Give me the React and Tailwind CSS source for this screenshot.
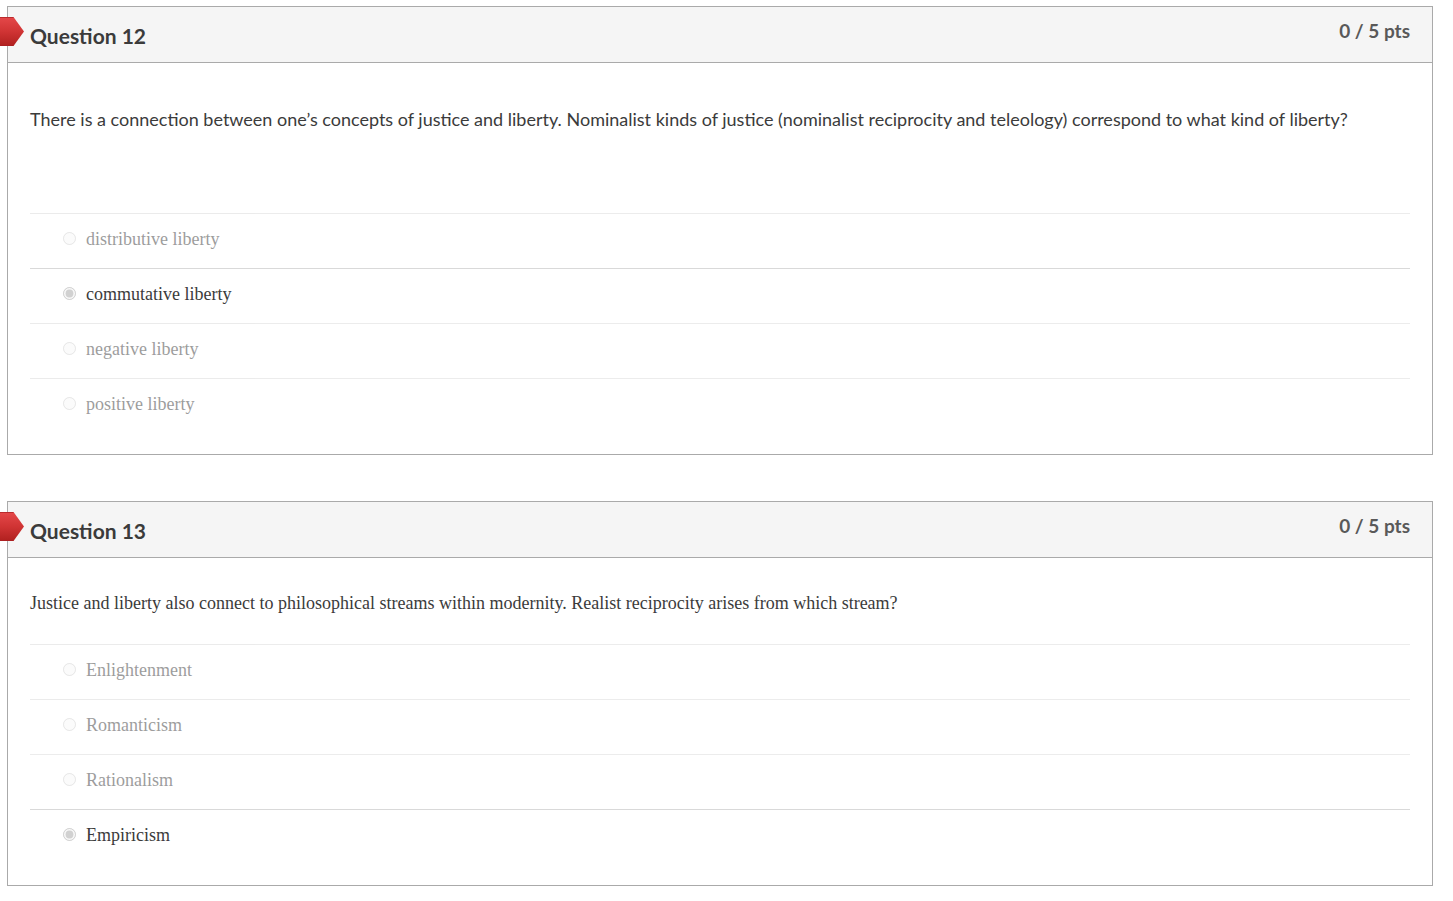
import React from "react";

const questions = [
  {
    id: 12,
    text: "There is a connection between one’s concepts of justice and liberty. Nominalist kinds of justice (nominalist reciprocity and teleology) correspond to what kind of liberty?",
    textClass: "pt-[43px] pb-20 font-['Lato',sans-serif]",
    answers: ["distributive liberty", "commutative liberty", "negative liberty", "positive liberty"],
    selected: 1,
  },
  {
    id: 13,
    text: "Justice and liberty also connect to philosophical streams within modernity. Realist reciprocity arises from which stream?",
    textClass: "pt-8 pb-[27px]",
    answers: ["Enlightenment", "Romanticism", "Rationalism", "Empiricism"],
    selected: 3,
  },
];

// red flag that hangs over the left edge of an incorrect question
function IncorrectArrow({ id }) {
  return (
    <svg className="absolute -left-2 top-[10px]" width="24" height="29" viewBox="0 0 24 29" aria-hidden="true">
      <defs>
        <linearGradient id={`arrow-${id}`} x1="0" y1="0" x2="0" y2="1">
          <stop offset="0" stopColor="#e5484a" />
          <stop offset="0.5" stopColor="#d03434" />
          <stop offset="1" stopColor="#b0201f" />
        </linearGradient>
      </defs>
      <path d="M0 0H13.5L24 14.5L13.5 29H0Z" fill={`url(#arrow-${id})`} />
      <path d="M0 0.5H13.5M0 28.5H13.5" stroke="#a91f22" strokeOpacity="0.7" fill="none" />
    </svg>
  );
}

function Answer({ question, text, checked }) {
  return (
    <label
      className={
        "flex items-start gap-[10px] border-t border-[#d9d9d9] pt-[12px] pb-[15px] pl-[33px] leading-[27px] " +
        (checked ? "" : "opacity-50")
      }
    >
      <input
        type="radio"
        name={`question-${question}`}
        defaultChecked={checked}
        disabled
        className="mt-1.5 size-[13px]"
      />
      <span>{text}</span>
    </label>
  );
}

function Question({ id, text, textClass, answers, selected }) {
  return (
    <section className="relative border border-[#aaaaaa] font-['Liberation_Serif',serif] text-[18px] text-[#3b3b3b]">
      <header className="flex h-14 justify-between border-b border-[#aaaaaa] bg-[#f5f5f5] px-[22px] font-['Lato',sans-serif] font-bold">
        <h2 id={`title-${id}`} className="pt-[15px] text-[21px] leading-[27px]">
          Question {id}
        </h2>
        <span className="pt-[10px] text-[19px] leading-[27px] text-[#595959]">0 / 5 pts</span>
      </header>
      <IncorrectArrow id={id} />
      <div className="px-[22px] pb-[21px]">
        <p className={"leading-[27px] " + textClass}>{text}</p>
        <fieldset aria-labelledby={`title-${id}`}>
          {answers.map((a, i) => (
            <Answer key={a} question={id} text={a} checked={i === selected} />
          ))}
        </fieldset>
      </div>
    </section>
  );
}

export default function App() {
  return (
    <main className="flex flex-col gap-[46px] bg-white pt-[6px] pr-5 pb-[15px] pl-[7px]">
      {questions.map((q) => (
        <Question key={q.id} {...q} />
      ))}
    </main>
  );
}
